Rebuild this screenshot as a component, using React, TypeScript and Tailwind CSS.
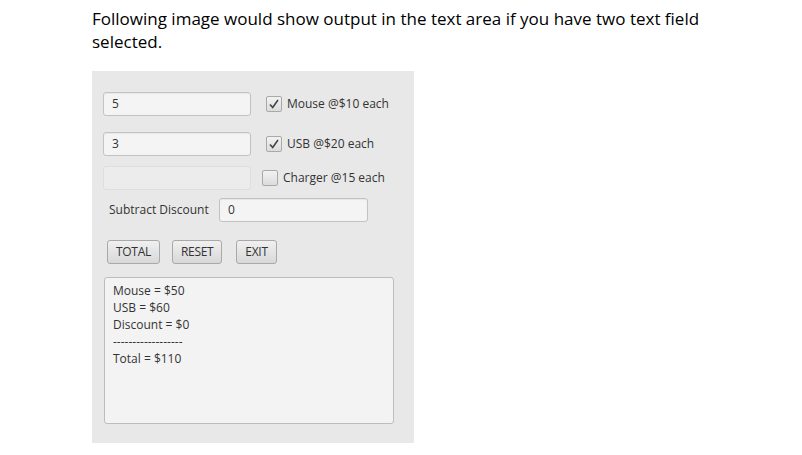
const font = { fontFamily: '"Open Sans", "Noto Sans", sans-serif' }

function Field({ value, w = "w-[148px]", disabled = false }: { value: string; w?: string; disabled?: boolean }) {
  return (
    <div
      className={`${w} h-[24px] rounded-[3px] border flex items-center px-[8px] text-[12px] text-[#333] ${
        disabled ? "border-[#dedede] bg-[#ececec]" : "border-[#c2c2c2] bg-[#f4f4f4] shadow-[inset_0_1px_1px_rgba(0,0,0,0.06)]"
      }`}
    >
      {value}
    </div>
  )
}

function Check({ checked, label }: { checked: boolean; label: string }) {
  return (
    <div className="flex items-center gap-[5px] text-[12px] text-[#333]">
      <div className="w-[16px] h-[16px] rounded-[2px] border border-[#a9a9a9] bg-gradient-to-b from-[#f2f2f2] to-[#dcdcdc] flex items-center justify-center">
        {checked && (
          <svg width="12" height="12" viewBox="0 0 12 12">
            <path d="M2 6.5 L4.7 9.5 L10 2" fill="none" stroke="#444" strokeWidth="1.6" />
          </svg>
        )}
      </div>
      <span>{label}</span>
    </div>
  )
}

function Btn({ label }: { label: string }) {
  return (
    <div className="h-[24px] px-[8px] rounded-[3px] border border-[#a9a9a9] bg-gradient-to-b from-[#f0f0f0] to-[#d8d8d8] flex items-center text-[12px] text-[#333] tracking-[-0.3px]">
      {label}
    </div>
  )
}

export default function App() {
  return (
    <div className="w-[802px] h-[455px] bg-white" style={font}>
      <div className="pl-[92px] pt-[7px] text-[17px] leading-[23px] text-black w-[700px]">
        Following image would show output in the text area if you have two text field selected.
      </div>
      <div className="ml-[92px] mt-[18px] w-[322px] h-[372px] bg-[#e8e8e8] pt-[21px] pl-[11px]">
        <div className="flex items-center">
          <Field value="5" />
          <div className="ml-[15px]"><Check checked label="Mouse @$10 each" /></div>
        </div>
        <div className="flex items-center mt-[16px]">
          <Field value="3" />
          <div className="ml-[15px]"><Check checked label="USB @$20 each" /></div>
        </div>
        <div className="flex items-center mt-[10px]">
          <Field value="" disabled />
          <div className="ml-[11px]"><Check checked={false} label="Charger @15 each" /></div>
        </div>
        <div className="flex items-center mt-[8px] pl-[6px] text-[12px] text-[#333]">
          <span className="w-[110px]">Subtract Discount</span>
          <Field value="0" w="w-[149px]" />
        </div>
        <div className="flex items-center mt-[18px] pl-[4px] gap-[12px]">
          <Btn label="TOTAL" />
          <Btn label="RESET" />
          <div className="ml-[2px]"><Btn label="EXIT" /></div>
        </div>
        <div className="ml-[1px] mt-[13px] w-[290px] h-[147px] rounded-[3px] border border-[#bdbdbd] bg-[#f3f3f3] px-[8px] pt-[4px] text-[12px] leading-[17px] text-[#333]">
          <div>Mouse = $50</div>
          <div>USB = $60</div>
          <div>Discount = $0</div>
          <div>------------------</div>
          <div>Total = $110</div>
        </div>
      </div>
    </div>
  )
}
